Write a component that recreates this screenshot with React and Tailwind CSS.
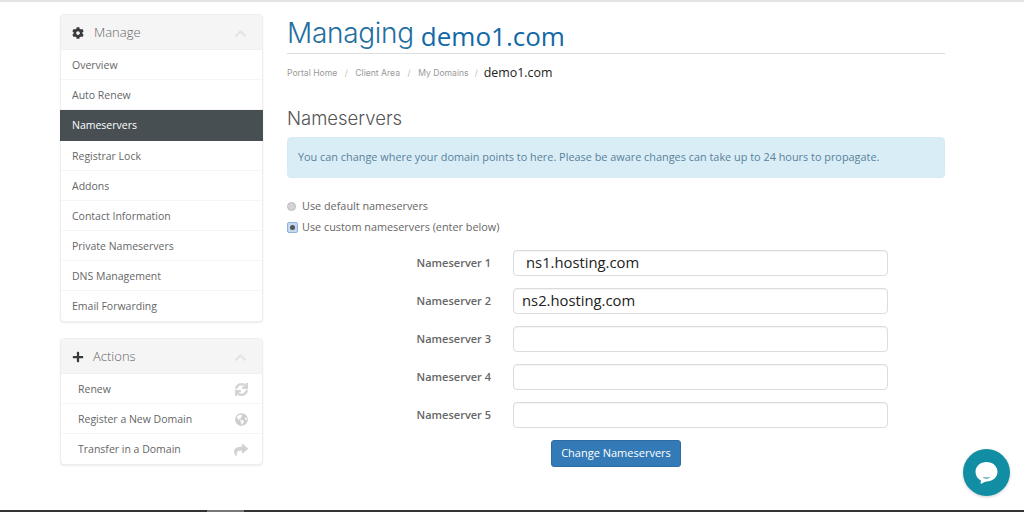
import React from "react";
import { FaCog, FaPlus, FaChevronUp, FaSync, FaGlobeAmericas, FaShare } from "react-icons/fa";

const manage = ["Overview", "Auto Renew", "Nameservers", "Registrar Lock", "Addons", "Contact Information", "Private Nameservers", "DNS Management", "Email Forwarding"];
const actions = [
  ["Renew", <FaSync className="text-[13px] text-[#d2d2d2] stroke-[#d2d2d2] stroke-[24px]" />],
  ["Register a New Domain", <FaGlobeAmericas className="text-[13px] text-[#cdcdcd]" />],
  ["Transfer in a Domain", <FaShare className="text-[14px] text-[#d2d2d2]" />],
];

function Header({ icon: Icon, title, gap }) {
  return (
    <div className="h-[35px] pt-[2px] flex items-center bg-[#f5f5f5] pl-[11px] pr-[15px] rounded-t-[4px] border-b border-[#f0f0f0]">
      <Icon className="text-[12px] text-[#3a3a3a] w-[12px]" />
      <span className={`text-[13px] font-light text-[#666] ${gap} flex-1`}>{title}</span>
      <FaChevronUp className="text-[13px] text-[#e3e3e3]" />
    </div>
  );
}

export default function App() {
  return (
    <div className="w-[1024px] h-[512px] overflow-hidden bg-white flex flex-col font-['Open_Sans',sans-serif] text-[#58595b]">
      <div className="h-[2px] bg-[#e4e4e4] shrink-0" />
      <div className="flex-1 flex min-h-0 pl-[60px]">
        <div className="w-[203px] shrink-0 pt-[12px] flex flex-col gap-[16px]">
          <div className="rounded-[4px] border border-[#eeeeee] shadow-[0_1px_2px_rgba(0,0,0,0.08)] bg-white">
            <Header icon={FaCog} title="Manage" gap="ml-[10px]" />
            {manage.map((m) => (
              <div key={m} className={m === "Nameservers"
                ? "h-[31px] -mx-px flex items-center pl-[12px] text-[10.5px] bg-[#474f53] text-white"
                : "h-[30px] pt-[2px] flex items-center pl-[11px] text-[10.5px] text-[#666] border-b border-[#f5f5f5] last:border-b-0"}>{m}</div>
            ))}
          </div>
          <div className="rounded-[4px] border border-[#eeeeee] shadow-[0_1px_2px_rgba(0,0,0,0.08)] bg-white">
            <Header icon={FaPlus} title="Actions" gap="ml-[9px]" />
            {actions.map(([t, icon]) => (
              <div key={t} className="h-[30px] pt-[2px] flex items-center justify-between pl-[17px] pr-[14px] text-[10.5px] text-[#666] border-b border-[#f5f5f5] last:border-b-0">
                <span>{t}</span>
                {icon}
              </div>
            ))}
          </div>
        </div>
        <div className="ml-[24px] w-[658px] shrink-0">
          <div className="h-[52px] border-b border-[#dddddd] flex items-end gap-[7px]">
            <span className="font-['Inter',sans-serif] font-light text-[28px] leading-[42px] text-[#1f6f9f] tracking-[-0.3px] mb-[-1px]">Managing</span>
            <span className="text-[26px] leading-[40px] text-[#1068a8] mb-[-3px]">demo1.com</span>
          </div>
          <div className="flex items-center h-[37px] pt-[1px] text-[8.6px] text-[#999] font-['Inter',sans-serif]">
            <span>Portal Home</span><span className="mx-[7.5px] text-[#bbb]">/</span>
            <span>Client Area</span><span className="mx-[7.5px] text-[#bbb]">/</span>
            <span>My Domains</span><span className="ml-[6px] mr-[6px] text-[#bbb]">/</span>
            <span className="text-[12.4px] text-[#222] font-['Open_Sans',sans-serif]">demo1.com</span>
          </div>
          <div className="mt-[14px] text-[18.5px] leading-[26px] text-[#555] font-['Inter',sans-serif] font-light">Nameservers</div>
          <div className="mt-[6px] h-[41px] rounded-[4px] bg-[#d9edf7] border border-[#d6ebf5] flex items-center pl-[10px] text-[10.88px] text-[#5a8199]">
            You can change where your domain points to here. Please be aware changes can take up to 24 hours to propagate.
          </div>
          <div className="mt-[21px] flex flex-col gap-[7px] text-[10.85px] text-[#666]">
            <label className="flex items-center h-[14px]">
              <span className="w-[9px] h-[9px] rounded-full bg-[#d4d4d4] border border-[#bbb]" />
              <span className="ml-[6px]">Use default nameservers</span>
            </label>
            <label className="flex items-center h-[14px]">
              <span className="w-[11px] h-[11px] rounded-[2px] bg-[#c4d8ef] border border-[#8fb0dc] flex items-center justify-center">
                <span className="w-[5px] h-[5px] rounded-full bg-[#555]" />
              </span>
              <span className="ml-[4px]">Use custom nameservers (enter below)</span>
            </label>
          </div>
          <div className="mt-[16px] flex flex-col gap-[12px]">
            {[["1", "ns1.hosting.com", "pl-[12px]"], ["2", "ns2.hosting.com", "pl-[8px]"], ["3", ""], ["4", ""], ["5", ""]].map(([n, v, p]) => (
              <div key={n} className="flex items-center h-[26px]">
                <div className="w-[204px] text-right text-[11px] font-semibold text-[#666]">Nameserver {n}</div>
                <div className={`ml-[22px] w-[375px] h-[26px] pb-[2px] rounded-[4px] border border-[#dcdcdc] shadow-[inset_0_1px_1px_rgba(0,0,0,0.05)] flex items-center text-[14.8px] text-[#222] ${p || ""}`}>{v}</div>
              </div>
            ))}
          </div>
          <div className="mt-[11px] ml-[264px]">
            <button className="w-[130px] h-[27px] rounded-[3px] bg-[#337ab7] border border-[#2e6da4] text-white text-[11px] font-['Open_Sans',sans-serif]">Change Nameservers</button>
          </div>
        </div>
      </div>
      <div className="h-[2px] shrink-0 flex bg-[#333]">
        <div className="ml-[207px] w-[37px] bg-[#777]" />
      </div>
      <div className="fixed left-[963px] top-[449px] w-[47px] h-[47px] rounded-full bg-[#118ea3] flex items-center justify-center shadow-[0_1px_3px_rgba(0,0,0,0.2)]">
        <svg width="25" height="25" viewBox="0 0 25 25">
          <path d="M12.5 2C18.6 2 23.5 6.2 23.5 11.8C23.5 17.4 18.6 21.5 12.5 21.5C11 21.5 9.5 22.5 7.2 23.8C6.8 24 6.3 23.7 6.5 23.3L7 20.6C3.6 18.9 1.5 15.6 1.5 11.8C1.5 6.2 6.4 2 12.5 2Z" fill="#fff" />
          <path d="M9 17C11 17.8 14 17.8 16 17C15.2 19 9.8 19 9 17Z" fill="#118ea3" />
        </svg>
      </div>
    </div>
  );
}
